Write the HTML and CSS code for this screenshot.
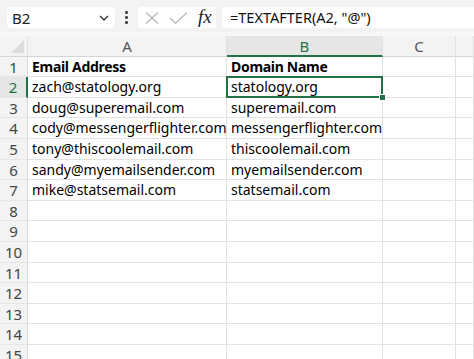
FILE: index.html
```html
<!DOCTYPE html>
<html>
<head>
<meta charset="utf-8">
<link rel="stylesheet" href="styles.css">
</head>
<body>
<div class="app">
  <div class="toolbar">
    <div class="namebox">
      <span class="ref">B2</span>
      <svg class="chev" width="10" height="6" viewBox="0 0 10 6"><path d="M1 1 L5 5 L9 1" fill="none" stroke="#333" stroke-width="1.3"/></svg>
    </div>
    <div class="dots"><span></span><span></span><span></span></div>
    <div class="fxbox">
      <svg class="ico" width="14" height="12" viewBox="0 0 14 12"><path d="M1 0.5 L13 11.5 M13 0.5 L1 11.5" fill="none" stroke="#b8b8b8" stroke-width="1.2"/></svg>
      <svg class="ico" width="19" height="12" viewBox="0 0 19 12"><path d="M1 6 L6.5 11.3 L18 0.5" fill="none" stroke="#b8b8b8" stroke-width="1.2"/></svg>
      <span class="fx">fx</span>
    </div>
    <div class="formula">=TEXTAFTER(A2, "@")</div>
  </div>
  <div class="sheet">
    <div class="corner"></div>
    <div class="colh">A</div>
    <div class="colh sel">B</div>
    <div class="colh">C</div>
    <div class="colh"></div>

    <div class="rowh">1</div><div class="cell b">Email Address</div><div class="cell b">Domain Name</div><div class="cell"></div><div class="cell"></div>
    <div class="rowh sel">2</div><div class="cell">zach@statology.org</div><div class="cell active">statology.org</div><div class="cell"></div><div class="cell"></div>
    <div class="rowh">3</div><div class="cell">doug@superemail.com</div><div class="cell">superemail.com</div><div class="cell"></div><div class="cell"></div>
    <div class="rowh">4</div><div class="cell">cody@messengerflighter.com</div><div class="cell">messengerflighter.com</div><div class="cell"></div><div class="cell"></div>
    <div class="rowh">5</div><div class="cell">tony@thiscoolemail.com</div><div class="cell">thiscoolemail.com</div><div class="cell"></div><div class="cell"></div>
    <div class="rowh">6</div><div class="cell">sandy@myemailsender.com</div><div class="cell">myemailsender.com</div><div class="cell"></div><div class="cell"></div>
    <div class="rowh">7</div><div class="cell">mike@statsemail.com</div><div class="cell">statsemail.com</div><div class="cell"></div><div class="cell"></div>
    <div class="rowh">8</div><div class="cell"></div><div class="cell"></div><div class="cell"></div><div class="cell"></div>
    <div class="rowh">9</div><div class="cell"></div><div class="cell"></div><div class="cell"></div><div class="cell"></div>
    <div class="rowh">10</div><div class="cell"></div><div class="cell"></div><div class="cell"></div><div class="cell"></div>
    <div class="rowh">11</div><div class="cell"></div><div class="cell"></div><div class="cell"></div><div class="cell"></div>
    <div class="rowh">12</div><div class="cell"></div><div class="cell"></div><div class="cell"></div><div class="cell"></div>
    <div class="rowh">13</div><div class="cell"></div><div class="cell"></div><div class="cell"></div><div class="cell"></div>
    <div class="rowh">14</div><div class="cell"></div><div class="cell"></div><div class="cell"></div><div class="cell"></div>
    <div class="rowh">15</div><div class="cell"></div><div class="cell"></div><div class="cell"></div><div class="cell"></div>
  </div>
</div>
</body>
</html>
```

FILE: styles.css
```css
html, body {
  margin: 0;
  padding: 0;
  background: #ffffff;
}
.app {
  width: 474px;
  height: 359px;
  overflow: hidden;
  font-family: "Noto Sans", "Open Sans", sans-serif;
  color: #000;
}
.toolbar {
  height: 36px;
  box-sizing: border-box;
  background: #f3f3f3;
  border-bottom: 4px solid #f7f7f7;
  padding: 7px 0 0 7px;
  display: flex;
  align-items: flex-start;
}
.namebox {
  width: 108px;
  height: 21px;
  background: #fff;
  border-radius: 4px;
  display: flex;
  align-items: center;
  justify-content: space-between;
  box-sizing: border-box;
  padding: 0 6px 0 5px;
  font-size: 15px;
}
.ref { color: #222; }
.chev { margin-top: 1px; }
.dots {
  width: 23px;
  height: 21px;
  display: flex;
  flex-direction: column;
  align-items: center;
  justify-content: center;
  gap: 2.5px;
}
.dots span {
  width: 2.4px;
  height: 2.4px;
  background: #444;
  border-radius: 50%;
}
.fxbox {
  width: 78px;
  height: 21px;
  background: #fff;
  border-radius: 4px;
  display: flex;
  align-items: center;
  box-sizing: border-box;
  padding-left: 7px;
}
.fxbox .ico { margin-right: 10px; }
.fx {
  font-family: "Liberation Serif", "DejaVu Serif", serif;
  font-style: italic;
  font-size: 19px;
  color: #222;
  line-height: 1;
  margin-top: -2px;
}
.formula {
  margin-left: 6px;
  flex: 1;
  height: 21px;
  background: #fff;
  border-radius: 4px 0 0 4px;
  font-size: 14.5px;
  line-height: 21px;
  padding-left: 8px;
  color: #111;
  white-space: nowrap;
}
.sheet {
  display: grid;
  grid-template-columns: 28px 199px 156px 73px 18px;
  grid-template-rows: 20.6px repeat(15, 20.6px);
  font-size: 14px;
}
.corner {
  background: #f3f3f3;
  border-right: 1px solid #e2e2e2;
  border-bottom: 1px solid #d6d6d6;
  box-sizing: border-box;
  position: relative;
}
.corner::after {
  content: "";
  position: absolute;
  right: 3px;
  bottom: 3px;
  width: 0;
  height: 0;
  border-left: 13px solid transparent;
  border-bottom: 13px solid #dcdcdc;
}
.colh {
  background: #f3f3f3;
  border-right: 1px solid #e2e2e2;
  border-bottom: 1px solid #d6d6d6;
  box-sizing: border-box;
  text-align: center;
  color: #555;
  line-height: 20px;
  font-size: 15px;
}
.colh.sel {
  background: #e6e6e6;
  color: #217346;
  border-bottom: 2px solid #217346;
}
.rowh {
  background: #f3f3f3;
  border-right: 1px solid #d6d6d6;
  border-bottom: 1px solid #e6e6e6;
  box-sizing: border-box;
  text-align: center;
  color: #444;
  line-height: 20px;
  font-size: 15px;
}
.rowh.sel {
  background: #e6e6e6;
  color: #217346;
  border-right: 2px solid #217346;
}
.cell {
  border-right: 1px solid #e2e2e2;
  border-bottom: 1px solid #e2e2e2;
  box-sizing: border-box;
  padding-left: 4px;
  line-height: 20px;
  white-space: nowrap;
  overflow: visible;
}
.cell.b { font-weight: bold; letter-spacing: -0.3px; }
.cell.active {
  position: relative;
}
.cell.active::after {
  content: "";
  position: absolute;
  left: -1px;
  top: -1px;
  right: -1px;
  bottom: -1px;
  border: 2px solid #217346;
}
.cell.active::before {
  content: "";
  position: absolute;
  right: -4px;
  bottom: -4px;
  width: 5px;
  height: 5px;
  background: #217346;
  border: 1px solid #fff;
  z-index: 2;
}
```
